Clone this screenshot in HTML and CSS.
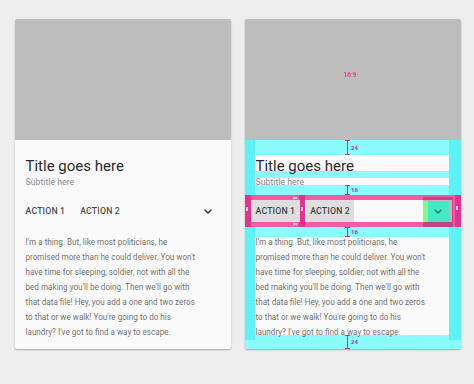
FILE: index.html
```html
<!DOCTYPE html>
<html lang="en">
<head>
<meta charset="utf-8">
<title>Card spec</title>
<link rel="stylesheet" href="styles.css">
</head>
<body>
<div class="board">
  <div class="card">
    <div class="media"></div>
    <div class="header">
      <div class="title">Title goes here</div>
      <div class="subtitle">Subtitle here</div>
    </div>
    <div class="actions">
      <span class="btn">Action 1</span>
      <span class="btn">Action 2</span>
      <span class="icon-btn"><svg width="8" height="5" viewBox="0 0 8 5"><path d="M0.7 0.7 L4 4 L7.3 0.7" fill="none" stroke="currentColor" stroke-width="1.5"/></svg></span>
    </div>
    <p class="body">I'm a thing. But, like most politicians, he<br>promised more than he could deliver. You won't<br>have time for sleeping, soldier, not with all the<br>bed making you'll be doing. Then we'll go with<br>that data file! Hey, you add a one and two zeros<br>to that or we walk! You're going to do his<br>laundry? I've got to find a way to escape.</p>
  </div>

  <div class="card card--spec">
    <div class="spec">
      <div class="sp sp-area"></div>
      <div class="sp sp-strip-l"></div>
      <div class="sp sp-strip-r"></div>
      <div class="sp sp-title"></div>
      <div class="sp sp-sub"></div>
      <div class="sp sp-body"></div>
      <div class="sp sp-bar"></div>
      <div class="sp sp-bar-in"></div>
      <div class="sp sp-bar-l"></div>
      <div class="sp sp-bar-gap"></div>
      <div class="sp sp-bar-r"></div>
      <div class="sp sp-icon"></div>
      <div class="sp sp-icon-in"></div>
      <div class="sp sp-icon-g"></div>
    </div>
    <div class="media"><span class="ratio">16:9</span></div>
    <div class="header">
      <div class="title">Title goes here</div>
      <div class="subtitle">Subtitle here</div>
    </div>
    <div class="actions">
      <span class="btn">Action 1</span>
      <span class="btn">Action 2</span>
      <span class="icon-btn"><svg width="8" height="5" viewBox="0 0 8 5"><path d="M0.7 0.7 L4 4 L7.3 0.7" fill="none" stroke="currentColor" stroke-width="1.5"/></svg></span>
    </div>
    <p class="body">I'm a thing. But, like most politicians, he<br>promised more than he could deliver. You won't<br>have time for sleeping, soldier, not with all the<br>bed making you'll be doing. Then we'll go with<br>that data file! Hey, you add a one and two zeros<br>to that or we walk! You're going to do his<br>laundry? I've got to find a way to escape.</p>
    <div class="marks">
      <div class="dim dim-a"><span>24</span></div>
      <div class="dim dim-b"><span>16</span></div>
      <div class="dim dim-c"><span>16</span></div>
      <div class="dim dim-d"><span>24</span></div>
      <i class="pin pin-l"></i>
      <i class="pin pin-g"></i>
      <i class="pin pin-t"></i>
      <i class="pin pin-b"></i>
      <i class="pin pin-r"></i>
    </div>
  </div>
</div>
</body>
</html>
```

FILE: styles.css
```css
* { box-sizing: border-box; }

html, body {
  margin: 0;
  background: #eeeeee;
}

body {
  font-family: Roboto, "Liberation Sans", Arial, sans-serif;
  width: 474px;
  height: 384px;
  overflow: hidden;
}

.board {
  display: flex;
  gap: 14px;
  padding: 19px 0 0 15px;
}

.card {
  position: relative;
  width: 216px;
  background: #fafafa;
  border-radius: 2px;
  box-shadow: 0 1px 2px rgba(0,0,0,0.22), 0 1px 1px rgba(0,0,0,0.12);
}

.media {
  position: relative;
  z-index: 1;
  height: 121px;
  background: #bdbdbd;
  border-radius: 2px 2px 0 0;
  display: flex;
  align-items: center;
  justify-content: center;
}

.header {
  position: relative;
  z-index: 1;
  padding: 16px 10.5px 0;
}

.title {
  font-size: 15px;
  line-height: 20px;
  color: rgba(0,0,0,0.87);
}

.subtitle {
  font-size: 8.75px;
  line-height: 12px;
  color: rgba(0,0,0,0.5);
}

.actions {
  position: relative;
  z-index: 1;
  margin-top: 7px;
  height: 32px;
  padding: 0 8px 0 6px;
  display: flex;
  align-items: center;
  gap: 6px;
}

.btn {
  height: 22px;
  padding: 0 4.5px;
  display: flex;
  align-items: center;
  font-size: 8.75px;
  font-weight: 500;
  letter-spacing: 0.15px;
  text-transform: uppercase;
  color: rgba(0,0,0,0.74);
}

.icon-btn {
  margin-left: auto;
  width: 30px;
  height: 30px;
  display: flex;
  align-items: center;
  justify-content: center;
  color: rgba(0,0,0,0.78);
}

.icon-btn svg { display: block; }

.body {
  position: relative;
  z-index: 1;
  margin: 8px 0 0;
  padding: 0 10.5px 9px;
  font-size: 8.15px;
  line-height: 15px;
  color: rgba(0,0,0,0.6);
}

/* ---------- spec overlay card ---------- */

.card--spec .btn { background: #dedede; }
.card--spec .icon-btn { color: rgba(0,60,50,0.6); }

.ratio {
  font-size: 6.5px;
  font-weight: 500;
  color: #e0308f;
  transform: translate(-3px, -5px);
}

.spec {
  position: absolute;
  inset: 0;
  z-index: 0;
  border-radius: 2px;
  overflow: hidden;
}

.sp { position: absolute; }

.sp-area    { left: 0; top: 121px; width: 216px; height: 209px; background: #8cfbfb; }
.sp-strip-l { left: 0; top: 121px; width: 10px; height: 200px; background: #5ff1f5; }
.sp-strip-r { left: 204px; top: 121px; width: 12px; height: 200px; background: #5ff1f5; }
.sp-title   { left: 10px; top: 136px; width: 194px; height: 16px; background: #fafafa; }
.sp-sub     { left: 10px; top: 159px; width: 194px; height: 7px; background: #fafafa; }
.sp-body    { left: 10px; top: 218px; width: 194px; height: 98px; background: #fafafa; }

.sp-bar     { left: 0; top: 176px; width: 216px; height: 32px; background: #f15ca9; }
.sp-bar-in  { left: 6px; top: 181px; width: 201px; height: 22px; background: #fafafa; }
.sp-bar-l   { left: 0; top: 176px; width: 6px; height: 32px; background: #e2338f; }
.sp-bar-gap { left: 54px; top: 176px; width: 6px; height: 32px; background: #e2338f; }
.sp-bar-r   { left: 210px; top: 176px; width: 6px; height: 32px; background: #e2338f; }

.sp-icon    { left: 178px; top: 178px; width: 30px; height: 30px; background: rgba(90,10,50,0.3); }
.sp-icon-in { left: 178px; top: 182px; width: 26px; height: 21px; background: #45eac2; }
.sp-icon-g  { left: 178px; top: 182px; width: 5px; height: 21px; background: #86f592; }

.marks {
  position: absolute;
  inset: 0;
  z-index: 2;
  pointer-events: none;
}

.dim {
  position: absolute;
  left: 100px;
  width: 5px;
  border-top: 1px solid #a23bc0;
  border-bottom: 1px solid #a23bc0;
}

.dim::before {
  content: "";
  position: absolute;
  left: 2px;
  top: 0;
  bottom: 0;
  width: 1px;
  background: #a23bc0;
}

.dim span {
  position: absolute;
  left: 6px;
  top: 50%;
  transform: translateY(-50%);
  font-size: 6px;
  font-weight: 700;
  line-height: 6px;
  color: #9c35b8;
}

.dim-a { top: 121px; height: 15px; }
.dim-b { top: 166px; height: 10px; }
.dim-c { top: 208px; height: 10px; }
.dim-d { top: 316px; height: 14px; }

.pin {
  position: absolute;
  background: #f8c2e0;
}

.pin-l { left: 1px; top: 188px; width: 2px; height: 4px; }
.pin-g { left: 56px; top: 188px; width: 2px; height: 4px; }
.pin-r { left: 211px; top: 187px; width: 2px; height: 4px; }
.pin-t { left: 48px; top: 178px; width: 4px; height: 2px; }
.pin-b { left: 48px; top: 204px; width: 4px; height: 2px; }
```
